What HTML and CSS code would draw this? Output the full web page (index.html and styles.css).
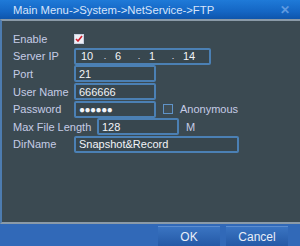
FILE: index.html
```html
<!DOCTYPE html>
<html lang="en">
<head>
<meta charset="UTF-8">
<link rel="stylesheet" href="styles.css">
<title>FTP</title>
</head>
<body>
<div class="dialog">

<div class="titleBar">
<span class="titleText">Main Menu-&gt;System-&gt;NetService-&gt;FTP</span>
<span class="closeBtn">&#x2715;</span>
</div>

<div class="panel">

<div class="row">
<span class="label">Enable</span>
<span class="check checked"><svg width="8" height="7" viewBox="0 0 8 7"><path d="M1 4 L3 6 L7 1" fill="none" stroke="#d02030" stroke-width="1.6"/></svg></span>
</div>

<div class="row">
<span class="label">Server IP</span>
<span class="box ipBox"><span>10</span><i>.</i><span>6</span><i>.</i><span>1</span><i>.</i><span>14</span></span>
</div>

<div class="row">
<span class="label">Port</span>
<span class="box midBox">21</span>
</div>

<div class="row">
<span class="label">User Name</span>
<span class="box midBox">666666</span>
</div>

<div class="row">
<span class="label">Password</span>
<span class="box midBox dots">&#9679;&#9679;&#9679;&#9679;&#9679;&#9679;</span>
<span class="check anonCheck"></span>
<span class="label">Anonymous</span>
</div>

<div class="row">
<span class="label">Max File Length</span>
<span class="box lenBox">128</span>
<span class="label unit">M</span>
</div>

<div class="row">
<span class="label">DirName</span>
<span class="box dirBox">Snapshot&amp;Record</span>
</div>

</div>

<div class="bottomBar">
<button class="btns">OK</button>
<button class="btns">Cancel</button>
</div>

</div>
</body>
</html>
```

FILE: styles.css
```css
*,*:before,*:after{
margin:0;
padding:0;
box-sizing:border-box;
}

body{
width:300px;
height:246px;
overflow:hidden;
background:#3b4a52;
font-family:"Liberation Sans", Arial, sans-serif;
font-size:11px;
}

.dialog{
width:300px;
height:246px;
display:flex;
flex-direction:column;
}

.titleBar{
height:19px;
display:flex;
align-items:center;
justify-content:space-between;
padding:0 10px 0 13px;
background:linear-gradient(#1f7ad8, #1466c4 60%, #0e55ac);
color:#d6e4fa;
font-size:11.3px;
}

.closeBtn{
color:#5f9ae0;
font-size:12px;
font-weight:bold;
}

.panel{
flex:1;
background:#3b4a52;
border-top:2px solid #8a9aa8;
border-left:2px solid #4d7cb0;
border-bottom:2px solid #8a9aa8;
padding:9px 0 0 11px;
}

.row{
display:flex;
align-items:center;
height:17.6px;
}

.label{
color:#c6cce6;
white-space:nowrap;
}

.row > .label:first-child{
width:61px;
}

.row > .label.unit{
margin-left:7px;
}

.check{
width:10px;
height:10px;
border:1px solid #5f93c8;
background:#3f4e57;
display:flex;
align-items:center;
justify-content:center;
}

.checked{
background:#eef0f6;
border-color:#c8d0e0;
}

.anonCheck{
margin:0 7px 0 7px;
}

.box{
height:17px;
border:2px solid #4b80b4;
border-radius:2px;
color:#f2f4f8;
display:flex;
align-items:center;
padding-left:3px;
background:#38474f;
}

.ipBox{
width:137px;
}

.ipBox span{
width:18px;
padding-left:2px;
}

.ipBox i{
font-style:normal;
width:16px;
text-align:center;
font-size:9px;
}

.midBox{
width:82px;
}

.dots{
font-size:10px;
letter-spacing:-0.5px;
}

.row:nth-child(6) > .label:first-child{
width:84px;
}

.lenBox{
width:82px;
}

.dirBox{
width:165px;
}

.bottomBar{
height:22px;
background:#3169b8;
display:flex;
justify-content:flex-end;
align-items:flex-end;
gap:6px;
padding-right:12px;
}

.btns{
width:62px;
height:20px;
border:none;
border-top:1px solid #5d8ed0;
background:linear-gradient(#3a74c2, #2459a6);
color:#e8eef8;
font-family:"Liberation Sans", Arial, sans-serif;
font-size:12px;
}
```
